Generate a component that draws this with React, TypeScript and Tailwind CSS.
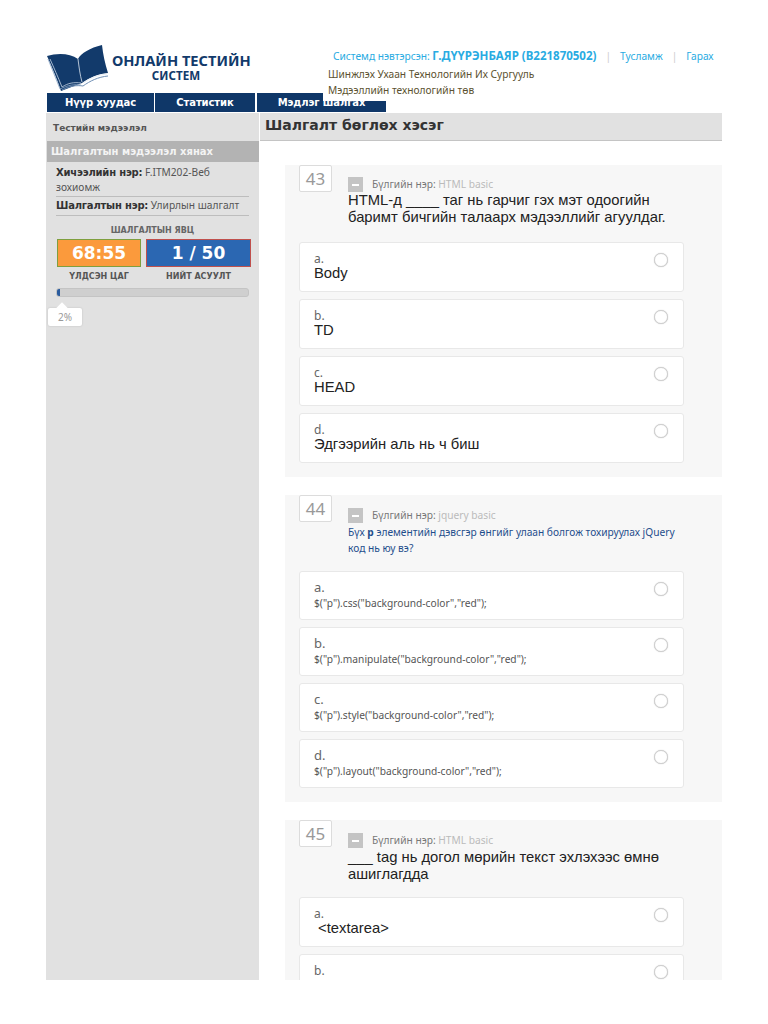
const sans = "font-['DejaVu_Sans',sans-serif]";
const noto = "font-['Noto_Sans',sans-serif]";
const arial = "font-['Liberation_Sans',Arial,sans-serif]";

type Question = {
  no: number;
  source: string;
  text: React.ReactNode;
  textClass: string;
  optionClass: string;
  keyClass: string;
  optionHeight: string;
  optionPad: string;
  headClass: string;
  metaPad: string;
  options: { key: string; text: string }[];
  className: string;
};

const QUESTIONS: Question[] = [
  {
    no: 43,
    source: "HTML basic",
    text: (
      <>
        HTML-д ____ таг нь гарчиг гэх мэт одоогийн
        <br />
        баримт бичгийн талаарх мэдээллийг агуулдаг.
      </>
    ),
    textClass: `${arial} text-[14.8px] leading-[17px] text-[#222]`,
    optionClass: `${arial} text-[14.8px] leading-[15px] text-[#222]`,
    keyClass: `${noto} text-[12px] leading-[14px] text-[#666]`,
    optionHeight: "h-[50px]",
    optionPad: "pt-[9px]",
    headClass: "h-[67px]",
    metaPad: "pt-[12px]",
    options: [
      { key: "a.", text: "Body" },
      { key: "b.", text: "TD" },
      { key: "c.", text: "HEAD" },
      { key: "d.", text: "Эдгээрийн аль нь ч биш" },
    ],
    className: "h-[312px] mb-[18px]",
  },
  {
    no: 44,
    source: "jquery basic",
    text: (
      <>
        Бүх <b>p</b> элементийн дэвсгэр өнгийг улаан болгож тохируулах jQuery
        <br />
        код нь юу вэ?
      </>
    ),
    textClass: `${noto} mt-[1px] text-[10.2px] leading-[16px] text-[#1f4e8c] whitespace-nowrap`,
    optionClass: `${noto} text-[10.2px] leading-[14px] text-[#555]`,
    keyClass: `${noto} text-[13px] leading-[17px] text-[#666]`,
    optionHeight: "h-[49px]",
    optionPad: "pt-[7px]",
    headClass: "h-[66px]",
    metaPad: "pt-[13px]",
    options: [
      { key: "a.", text: '$("p").css("background-color","red");' },
      { key: "b.", text: '$("p").manipulate("background-color","red");' },
      { key: "c.", text: '$("p").style("background-color","red");' },
      { key: "d.", text: '$("p").layout("background-color","red");' },
    ],
    className: "h-[307px] mb-[18px]",
  },
  {
    no: 45,
    source: "HTML basic",
    text: (
      <>
        ___ tag нь догол мөрийн текст эхлэхээс өмнө
        <br />
        ашиглагдда
      </>
    ),
    textClass: `${arial} mt-[1px] text-[14.8px] leading-[17px] text-[#222]`,
    optionClass: `${arial} text-[14.8px] leading-[15px] text-[#222]`,
    keyClass: `${noto} text-[12px] leading-[14px] text-[#666]`,
    optionHeight: "h-[50px]",
    optionPad: "pt-[9px]",
    headClass: "h-[67px]",
    metaPad: "pt-[13px]",
    options: [
      { key: "a.", text: "\u00a0<textarea>" },
      { key: "b.", text: "" },
    ],
    className: "h-[160px]",
  },
];

const Logo = () => (
  <svg width="62" height="47" viewBox="0 0 62 47" className="shrink-0">
    <path d="M0 12 C10 9 23 9 31 15 C34 9 43 4 55 1 C56 10 58 20 61 29 C50 30 42 34 35 39 L14 47 C10 35 5 23 0 12 Z" fill="#123a6b" />
    <path d="M31 15 C32 23 33 31 35 38" fill="none" stroke="#dce5ef" strokeWidth="0.8" />
    <path d="M3 15 C7 24 11 33 15 43 C21 39 27 38 34 39" fill="none" stroke="#c5d3e3" strokeWidth="0.8" />
    <path d="M1 15 C5 25 9 35 13 45 C21 41 28 40 34 41" fill="none" stroke="#8aa5c4" strokeWidth="0.8" />
    <path d="M36 39 C43 34 50 31 60 30" fill="none" stroke="#e8eef5" strokeWidth="1.2" />
    <path d="M15 46 C22 42 30 41 36 42 C43 37 51 33 61 32" fill="none" stroke="#6f8fb5" strokeWidth="1" />
  </svg>
);

const Option = ({ q, k, text }: { q: Question; k: string; text: string }) => (
  <div className={`relative ${q.optionHeight} ${q.optionPad} shrink-0 rounded-[3px] border border-[#e8e8e8] bg-white pl-[14px]`}>
    <div className={q.keyClass}>{k}</div>
    <div className={q.optionClass}>{text}</div>
    <span className="absolute right-[15px] top-[10px] h-[14px] w-[14px] rounded-full border-[1.5px] border-[#cfcfcf] bg-white shadow-[0_0_1px_#bbb]" />
  </div>
);

const QuestionBlock = ({ q }: { q: Question }) => (
  <section className={`${q.className} overflow-hidden bg-[#f7f7f7] pl-[14px] pr-[38px]`}>
    <div className={`flex ${q.headClass}`}>
      <div className={`${noto} flex h-[27px] w-[33px] shrink-0 items-center justify-center rounded-[2px] border border-[#dcdcdc] bg-white text-[17px] text-[#999]`}>
        {q.no}
      </div>
      <div className={`ml-[16px] ${q.metaPad}`}>
        <div className="flex items-center">
          <span className="flex h-[15px] w-[15px] items-center justify-center bg-[#c4c4c4]">
            <span className="h-[2px] w-[7px] bg-white" />
          </span>
          <span className={`${noto} ml-[9px] text-[10.2px] leading-[15px]`}>
            <span className="text-[#777]">Бүлгийн нэр:</span> <span className="text-[#bbb]">{q.source}</span>
          </span>
        </div>
        <div className={q.textClass}>{q.text}</div>
      </div>
    </div>
    <div className="mt-[10px] flex flex-col gap-[7px]">
      {q.options.map((o) => (
        <Option key={o.key} q={q} k={o.key} text={o.text} />
      ))}
    </div>
  </section>
);

const Sidebar = () => (
  <aside className={`${sans} h-[867px] w-[213px] shrink-0 bg-[#e1e1e1]`}>
    <div className="h-[28px] pl-[7px] pt-[9px] text-[9px] font-bold leading-[12px] text-[#555]">Тестийн мэдээлэл</div>
    <div className="ml-[1px] h-[21px] bg-[#b3b3b3] pl-[4px] text-[10px] font-bold leading-[21px] text-[#f4f4f4]">
      Шалгалтын мэдээлэл хянах
    </div>
    <div className={`${noto} px-[10px] pt-[3px] text-[10.2px] leading-[15px] text-[#555]`}>
      <div className="h-[32px] border-b border-[#bdbdbd]">
        <b className={`${sans} text-[10px] leading-[12px] tracking-[-0.2px] text-[#333]`}>Хичээлийн нэр:</b> F.ITM202-Веб зохиомж
      </div>
      <div className="mt-[1px] h-[18px] whitespace-nowrap border-b border-[#bdbdbd]">
        <b className={`${sans} text-[10px] leading-[12px] tracking-[-0.2px] text-[#333]`}>Шалгалтын нэр:</b> Улирлын шалгалт
      </div>
    </div>
    <div className="mt-[9px] text-center text-[8px] font-bold leading-[12px] text-[#666]">ШАЛГАЛТЫН ЯВЦ</div>
    <div className="mt-[2px] flex gap-[5px] pl-[11px]">
      <div className="h-[28px] w-[84px] border border-[#7f9f3f] bg-[#fb9a3c] text-center text-[17px] font-bold leading-[26px] text-white">
        68:55
      </div>
      <div className="h-[28px] w-[105px] border border-[#c0504d] bg-[#2b67b2] text-center text-[17px] font-bold leading-[26px] text-white">
        1 / 50
      </div>
    </div>
    <div className="mt-[3px] flex gap-[5px] pl-[11px] text-center text-[8px] font-bold leading-[14px] text-[#555]">
      <div className="w-[84px]">ҮЛДСЭН ЦАГ</div>
      <div className="w-[105px]">НИЙТ АСУУЛТ</div>
    </div>
    <div className="ml-[10px] mt-[4px] h-[9px] w-[193px] overflow-hidden rounded-[3px] border border-[#c4c4c4] bg-[#cfcfcf]">
      <div className="h-full w-[3px] bg-[#2b5c9e]" />
    </div>
    <div className={`${noto} relative ml-[2px] mt-[11px] flex h-[18px] w-[34px] items-center justify-center rounded-[2px] bg-white text-[10px] text-[#999] shadow-[0_0_2px_#bbb]`}>
      <span className="absolute -top-[4px] left-[10px] h-[8px] w-[8px] rotate-45 bg-white" />
      <span className="relative">2%</span>
    </div>
  </aside>
);

const NavItem = ({ label, className }: { label: string; className: string }) => (
  <div className={`${sans} ${className} h-[19px] bg-[#0f3768] text-center text-[10px] font-bold leading-[19px] tracking-[-0.1px] text-white`}>{label}</div>
);

export default function App() {
  return (
    <div className="relative h-[1024px] w-[768px] overflow-hidden bg-white">
      <header className="h-[93px] pl-[47px] pt-[44px]">
        <div className="flex">
          <Logo />
          <div className={`${noto} ml-[3px] w-[138px] text-center font-bold text-[#123a6b]`}>
            <div className="mt-[7px] whitespace-nowrap text-[14.6px] leading-[18px]">ОНЛАЙН ТЕСТИЙН</div>
            <div className="pr-[10px] text-[11.6px] leading-[13px]">СИСТЕМ</div>
          </div>
        </div>
      </header>

      <nav className="flex gap-[1px] pl-[47px]">
        <NavItem label="Нүүр хуудас" className="w-[107px]" />
        <NavItem label="Статистик" className="mr-[1px] w-[100px]" />
        <NavItem label="Мэдлэг шалгах" className="w-[129px]" />
      </nav>

      {/* white block of the header lies over the last menu tab */}
      <div className={`${noto} absolute left-[323px] top-[46px] h-[55px] w-[400px] bg-white`}>
        <div className="flex whitespace-nowrap pl-[10px] text-[10.2px] leading-[20px] text-[#29abe2]">
          <span>
            Системд нэвтэрсэн: <b className="text-[11.5px]">Г.ДҮҮРЭНБАЯР (B221870502)</b>
          </span>
          <span className="ml-[9px] mr-[9px] text-[#ccc]">|</span>
          <span>Тусламж</span>
          <span className="ml-[9px] mr-[9px] text-[#ccc]">|</span>
          <span>Гарах</span>
        </div>
        <div className="pl-[5px] text-[10.2px] leading-[16px] text-[#5c5230]">
          <div>Шинжлэх Ухаан Технологийн Их Сургууль</div>
          <div>Мэдээллийн технологийн төв</div>
        </div>
      </div>

      <div className="ml-[46px] mt-[1px] flex">
        <Sidebar />
        <main className="ml-[1px] w-[462px]">
          <h1 className={`${sans} h-[28px] border-b border-[#c4c4c4] bg-[#e1e1e1] pl-[5px] text-[14px] font-bold leading-[25px] text-[#333]`}>
            Шалгалт бөглөх хэсэг
          </h1>
          <div className="ml-[25px] mt-[24px]">
            {QUESTIONS.map((q) => (
              <QuestionBlock key={q.no} q={q} />
            ))}
          </div>
        </main>
      </div>
    </div>
  );
}
